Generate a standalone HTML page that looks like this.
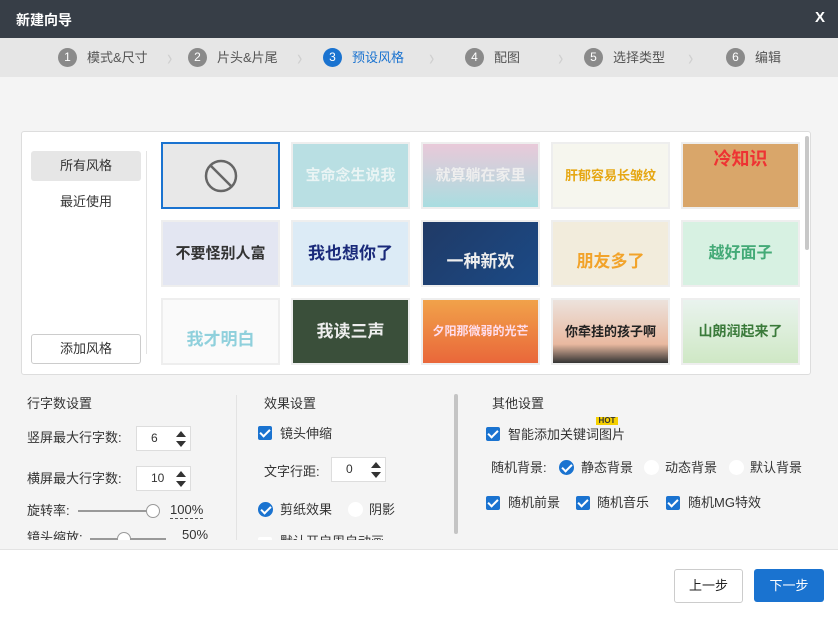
<!DOCTYPE html>
<html><head><meta charset="utf-8"><style>
*{margin:0;padding:0;box-sizing:border-box}
body{width:838px;height:620px;position:relative;overflow:hidden;background:#f4f4f4;font-family:"Liberation Sans","Noto Sans CJK SC",sans-serif;font-size:13px;color:#333}
.a{position:absolute}
.title{left:0;top:0;width:838px;height:38px;background:#373e47;color:#fff;font-weight:bold;font-size:14px}
.steps{left:0;top:38px;width:838px;height:39px;background:#e6e6e6}
.c{width:19px;height:19px;border-radius:50%;background:#8a8a8a;color:#fff;font-size:12px;text-align:center;line-height:19px}
.st{font-size:13px;color:#555;line-height:19px}
.chev{color:#cfcfcf;font-size:22px;line-height:19px;transform:scaleX(0.7)}
.panel{left:21px;top:131px;width:790px;height:244px;background:#fff;border:1px solid #ddd;border-radius:3px}
.th{width:119px;height:67px;border:2px solid #eee;overflow:hidden;font-size:15px;text-align:center;line-height:63px;font-weight:bold}
.btn{border:1px solid #ccc;border-radius:3px;background:#fff;text-align:center}
.spin{width:55px;height:25px;background:#fff;border:1px solid #ddd;font-size:12px;line-height:23px;padding-left:14px}
.spin:after{content:"";position:absolute;right:4px;top:4px;border:5px solid transparent;border-bottom:6px solid #333;border-top:0}
.spin:before{content:"";position:absolute;right:4px;top:14px;border:5px solid transparent;border-top:6px solid #333;border-bottom:0}
.cb{width:14px;height:14px;background:#1a73d0;border-radius:2px}
.cb:after{content:"";position:absolute;left:4px;top:1px;width:4px;height:8px;border:solid #fff;border-width:0 2px 2px 0;transform:rotate(45deg)}
.rd{width:15px;height:15px;border-radius:50%;background:#1a73d0}
.rd:after{content:"";position:absolute;left:5px;top:2px;width:4px;height:8px;border:solid #fff;border-width:0 2px 2px 0;transform:rotate(45deg)}
.ro{width:15px;height:15px;border-radius:50%;background:#fff}
.t{line-height:16px;white-space:nowrap}
</style></head><body>
<div class="a title"><span class="a" style="left:16px;top:10px">新建向导</span><span class="a" style="right:13px;top:9px;font-size:15px;font-family:'Liberation Sans',sans-serif">X</span></div>
<div class="a steps">
<div class="a c" style="left:58px;top:10px">1</div><div class="a st" style="left:87px;top:10px">模式&amp;尺寸</div><div class="a chev" style="left:166px;top:10px">›</div>
<div class="a c" style="left:188px;top:10px">2</div><div class="a st" style="left:217px;top:10px">片头&amp;片尾</div><div class="a chev" style="left:296px;top:10px">›</div>
<div class="a c" style="left:323px;top:10px;background:#1a73d0">3</div><div class="a st" style="left:352px;top:10px;color:#1a73d0">预设风格</div><div class="a chev" style="left:428px;top:10px">›</div>
<div class="a c" style="left:465px;top:10px">4</div><div class="a st" style="left:494px;top:10px">配图</div><div class="a chev" style="left:557px;top:10px">›</div>
<div class="a c" style="left:584px;top:10px">5</div><div class="a st" style="left:613px;top:10px">选择类型</div><div class="a chev" style="left:687px;top:10px">›</div>
<div class="a c" style="left:726px;top:10px">6</div><div class="a st" style="left:755px;top:10px">编辑</div>
</div>
<div class="a panel"></div>
<div class="a" style="left:31px;top:151px;width:110px;height:30px;background:#e6e6e6;border-radius:3px;text-align:center;line-height:30px">所有风格</div>
<div class="a" style="left:31px;top:187px;width:110px;height:30px;text-align:center;line-height:30px">最近使用</div>
<div class="a btn" style="left:31px;top:334px;width:110px;height:30px;line-height:28px">添加风格</div>
<div class="a" style="left:146px;top:151px;width:1px;height:203px;background:#e3e3e3"></div>
<div class="a" style="left:805px;top:136px;width:4px;height:114px;background:#c8c8c8;border-radius:2px"></div>
<div class="a th" style="left:161px;top:142px;background:#e8e8e8;border-color:#1a73d0"><svg width="36" height="36" style="margin-top:14px" viewBox="0 0 36 36"><circle cx="18" cy="18" r="15" fill="none" stroke="#666" stroke-width="2.5"/><line x1="8" y1="8" x2="28" y2="28" stroke="#666" stroke-width="2.5"/></svg></div>
<div class="a th" style="left:291px;top:142px;background:#b9dfe3;color:#eaf4f4">宝命念生说我</div>
<div class="a th" style="left:421px;top:142px;background:linear-gradient(#e9c9d9,#a9dde0);color:#eee">就算躺在家里</div>
<div class="a th" style="left:551px;top:142px;background:#f6f6ee;color:#e6a713;font-size:13px">肝郁容易长皱纹</div>
<div class="a th" style="left:681px;top:142px;background:#d9a66a;color:#e33;font-size:18px;line-height:30px">冷知识</div>
<div class="a th" style="left:161px;top:220px;background:#e3e6f2;color:#333">不要怪别人富</div>
<div class="a th" style="left:291px;top:220px;background:#dcebf6;color:#1a2a7a;font-size:17px">我也想你了</div>
<div class="a th" style="left:421px;top:220px;background:linear-gradient(135deg,#203a66,#1b4a86);color:#eee;font-size:17px;line-height:80px">一种新欢</div>
<div class="a th" style="left:551px;top:220px;background:#f2ecdc;color:#f2a32a;font-size:17px;line-height:80px">朋友多了</div>
<div class="a th" style="left:681px;top:220px;background:#d7f1e2;color:#4a7;font-size:16px">越好面子</div>
<div class="a th" style="left:161px;top:298px;background:#fafafa;color:#8fd0dc;font-size:17px;line-height:80px">我才明白</div>
<div class="a th" style="left:291px;top:298px;background:#3a4f3a;color:#eee;font-size:17px">我读三声</div>
<div class="a th" style="left:421px;top:298px;background:linear-gradient(#f1a24a,#e9673a);color:#fde;font-size:12px">夕阳那微弱的光芒</div>
<div class="a th" style="left:551px;top:298px;background:linear-gradient(#ece2dc,#e9b9a0 70%,#333);color:#222;font-size:13px">你牵挂的孩子啊</div>
<div class="a th" style="left:681px;top:298px;background:linear-gradient(#e9f3ee,#cfe8c5);color:#3a7a3a;font-size:14px">山朗润起来了</div>

<div class="a" style="left:0;top:380px;width:838px;height:160px;overflow:hidden">
<div class="a t" style="left:27px;top:16px">行字数设置</div>
<div class="a t" style="left:27px;top:50px">竖屏最大行字数:</div>
<div class="a spin" style="left:136px;top:46px">6</div>
<div class="a t" style="left:27px;top:91px">横屏最大行字数:</div>
<div class="a spin" style="left:136px;top:86px">10</div>
<div class="a t" style="left:27px;top:123px">旋转率:</div>
<div class="a" style="left:78px;top:130px;width:75px;height:2px;background:#999"></div>
<div class="a" style="left:146px;top:124px;width:14px;height:14px;border-radius:50%;background:#fff;border:1px solid #999"></div>
<div class="a t" style="left:170px;top:122px;border-bottom:1px dashed #555">100%</div>
<div class="a t" style="left:27px;top:150px">镜头缩放:</div>
<div class="a" style="left:90px;top:158px;width:76px;height:2px;background:#999"></div>
<div class="a" style="left:117px;top:152px;width:14px;height:14px;border-radius:50%;background:#fff;border:1px solid #999"></div>
<div class="a t" style="left:182px;top:147px;border-bottom:1px dashed #555">50%</div>
<div class="a" style="left:236px;top:15px;width:1px;height:145px;background:#e3e3e3"></div>
<div class="a t" style="left:264px;top:16px">效果设置</div>
<div class="a cb" style="left:258px;top:46px"></div><div class="a t" style="left:280px;top:46px">镜头伸缩</div>
<div class="a t" style="left:264px;top:84px">文字行距:</div>
<div class="a spin" style="left:331px;top:77px">0</div>
<div class="a rd" style="left:258px;top:122px"></div><div class="a t" style="left:280px;top:122px">剪纸效果</div>
<div class="a ro" style="left:348px;top:122px"></div><div class="a t" style="left:369px;top:122px">阴影</div>
<div class="a" style="left:258px;top:157px;width:14px;height:14px;background:#fff;border-radius:2px"></div><div class="a t" style="left:280px;top:154px">默认开启周自动画</div>
<div class="a" style="left:454px;top:14px;width:4px;height:140px;background:#c4c4c4;border-radius:2px"></div>
<div class="a t" style="left:492px;top:16px">其他设置</div>
<div class="a" style="left:596px;top:37px;width:22px;height:8px;background:#f5d000;color:#333;font-size:8px;line-height:8px;font-weight:bold;text-align:center">HOT</div>
<div class="a cb" style="left:486px;top:47px"></div><div class="a t" style="left:508px;top:47px">智能添加关键词图片</div>
<div class="a t" style="left:491px;top:80px">随机背景:</div>
<div class="a rd" style="left:559px;top:80px"></div><div class="a t" style="left:581px;top:80px">静态背景</div>
<div class="a ro" style="left:644px;top:80px"></div><div class="a t" style="left:665px;top:80px">动态背景</div>
<div class="a ro" style="left:729px;top:80px"></div><div class="a t" style="left:750px;top:80px">默认背景</div>
<div class="a cb" style="left:486px;top:116px"></div><div class="a t" style="left:508px;top:115px">随机前景</div>
<div class="a cb" style="left:576px;top:116px"></div><div class="a t" style="left:597px;top:115px">随机音乐</div>
<div class="a cb" style="left:666px;top:116px"></div><div class="a t" style="left:688px;top:115px">随机MG特效</div>
</div>
<div class="a" style="left:0;top:549px;width:838px;height:71px;background:#fff;border-top:1px solid #e3e3e3"></div>
<div class="a btn" style="left:674px;top:569px;width:69px;height:34px;line-height:32px;color:#222">上一步</div>
<div class="a" style="left:754px;top:569px;width:70px;height:33px;line-height:33px;background:#1a73d0;color:#fff;border-radius:3px;text-align:center">下一步</div>
</body></html>
